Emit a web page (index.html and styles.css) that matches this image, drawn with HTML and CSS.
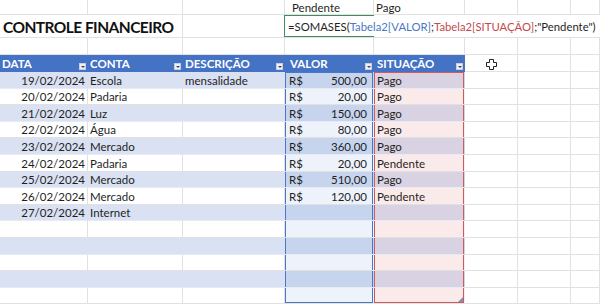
FILE: index.html
```html
<!DOCTYPE html>
<html lang="pt-BR">
<head>
<meta charset="utf-8">
<title>Controle Financeiro</title>
<link rel="stylesheet" href="styles.css">
</head>
<body>
<div class="sheet">
  <div class="row r1">
    <div class="c"></div><div class="c"></div><div class="c"></div>
    <div class="c ind">Pendente</div><div class="c">Pago</div>
    <div class="c"></div><div class="c"></div><div class="c"></div>
  </div>
  <div class="row r2">
    <div class="c title">CONTROLE FINANCEIRO</div>
    <div class="c"></div>
    <div class="c formula">
      <div class="active"><span>=SOMASES(</span><span class="ref-b">Tabela2[VALOR]</span><span>;</span><span class="ref-r">Tabela2[SITUAÇÃO]</span><span>;"Pendente")</span><span class="caret"></span></div>
    </div>
  </div>
  <div class="row r3">
    <div class="c"></div><div class="c"></div><div class="c"></div><div class="c"></div>
    <div class="c"></div><div class="c"></div><div class="c"></div><div class="c"></div>
  </div>
  <div class="row head">
    <div class="c h">DATA<i class="flt"></i></div>
    <div class="c h">CONTA<i class="flt"></i></div>
    <div class="c h">DESCRIÇÃO<i class="flt"></i></div>
    <div class="c h">VALOR<i class="flt"></i></div>
    <div class="c h">SITUAÇÃO<i class="flt"></i></div>
    <div class="c cur"><svg width="11" height="11" viewBox="0 0 11 11"><path d="M3.5 .5h4v3h3v4h-3v3h-4v-3h-3v-4h3z" fill="#fff" stroke="#222" stroke-width="1"/></svg></div>
    <div class="c"></div><div class="c"></div>
  </div>

  <div class="row band first">
    <div class="c t d">19/02/2024</div><div class="c t">Escola</div><div class="c t">mensalidade</div>
    <div class="c t v"><span>R$</span><span>500,00</span></div><div class="c t s">Pago</div>
    <div class="c"></div><div class="c"></div><div class="c"></div>
  </div>
  <div class="row">
    <div class="c t d">20/02/2024</div><div class="c t">Padaria</div><div class="c t"></div>
    <div class="c t v"><span>R$</span><span>20,00</span></div><div class="c t s">Pago</div>
    <div class="c"></div><div class="c"></div><div class="c"></div>
  </div>
  <div class="row band">
    <div class="c t d">21/02/2024</div><div class="c t">Luz</div><div class="c t"></div>
    <div class="c t v"><span>R$</span><span>150,00</span></div><div class="c t s">Pago</div>
    <div class="c"></div><div class="c"></div><div class="c"></div>
  </div>
  <div class="row">
    <div class="c t d">22/02/2024</div><div class="c t">Água</div><div class="c t"></div>
    <div class="c t v"><span>R$</span><span>80,00</span></div><div class="c t s">Pago</div>
    <div class="c"></div><div class="c"></div><div class="c"></div>
  </div>
  <div class="row band">
    <div class="c t d">23/02/2024</div><div class="c t">Mercado</div><div class="c t"></div>
    <div class="c t v"><span>R$</span><span>360,00</span></div><div class="c t s">Pago</div>
    <div class="c"></div><div class="c"></div><div class="c"></div>
  </div>
  <div class="row">
    <div class="c t d">24/02/2024</div><div class="c t">Padaria</div><div class="c t"></div>
    <div class="c t v"><span>R$</span><span>20,00</span></div><div class="c t s">Pendente</div>
    <div class="c"></div><div class="c"></div><div class="c"></div>
  </div>
  <div class="row band">
    <div class="c t d">25/02/2024</div><div class="c t">Mercado</div><div class="c t"></div>
    <div class="c t v"><span>R$</span><span>510,00</span></div><div class="c t s">Pago</div>
    <div class="c"></div><div class="c"></div><div class="c"></div>
  </div>
  <div class="row">
    <div class="c t d">26/02/2024</div><div class="c t">Mercado</div><div class="c t"></div>
    <div class="c t v"><span>R$</span><span>120,00</span></div><div class="c t s">Pendente</div>
    <div class="c"></div><div class="c"></div><div class="c"></div>
  </div>
  <div class="row band">
    <div class="c t d">27/02/2024</div><div class="c t">Internet</div><div class="c t"></div>
    <div class="c t v"></div><div class="c t s"></div>
    <div class="c"></div><div class="c"></div><div class="c"></div>
  </div>
  <div class="row">
    <div class="c t"></div><div class="c t"></div><div class="c t"></div>
    <div class="c t v"></div><div class="c t s"></div>
    <div class="c"></div><div class="c"></div><div class="c"></div>
  </div>
  <div class="row band">
    <div class="c t"></div><div class="c t"></div><div class="c t"></div>
    <div class="c t v"></div><div class="c t s"></div>
    <div class="c"></div><div class="c"></div><div class="c"></div>
  </div>
  <div class="row">
    <div class="c t"></div><div class="c t"></div><div class="c t"></div>
    <div class="c t v"></div><div class="c t s"></div>
    <div class="c"></div><div class="c"></div><div class="c"></div>
  </div>
  <div class="row band">
    <div class="c t"></div><div class="c t"></div><div class="c t"></div>
    <div class="c t v"></div><div class="c t s"></div>
    <div class="c"></div><div class="c"></div><div class="c"></div>
  </div>
  <div class="row last">
    <div class="c t"></div><div class="c t"></div><div class="c t"></div>
    <div class="c t v"></div><div class="c t s"><svg class="grip" width="5" height="5" viewBox="0 0 5 5"><path d="M5 0V5H0z" fill="#7f8fb8"/></svg></div>
    <div class="c"></div><div class="c"></div><div class="c"></div>
  </div>
</div>
</body>
</html>
```
FILE: styles.css
```css
* { box-sizing: border-box; }
html, body { margin: 0; padding: 0; background: #fff; }
body {
  width: 600px;
  height: 305px;
  overflow: hidden;
  font-family: Lato, "Liberation Sans", sans-serif;
  font-size: 11.5px;
  color: #1f1f1f;
}
.sheet {
  display: grid;
  grid-template-columns: 88px 95px 102px 89px 91px 53px 53px 1fr;
  grid-template-rows: 15px 23px 17px 17px repeat(14, 16.6px);
}
.row { display: contents; }
.c {
  border-right: 1px solid #e1e1e1;
  border-bottom: 1px solid #e1e1e1;
  display: flex;
  align-items: flex-end;
  padding: 0 2px 1px 2px;
  white-space: nowrap;
  min-width: 0;
  position: relative;
}
.ind { padding-left: 7px; }
.r1 .c { padding-bottom: 0; }

/* title row */
.r2 .c { align-items: center; }
.title {
  grid-column: 1 / 3;
  font-weight: 700;
  font-size: 15.5px;
  letter-spacing: -0.55px;
  color: #111;
  padding-left: 3px;
  padding-top: 2px;
}
.formula {
  grid-column: 4 / -1;
  border-right: none;
  padding: 0;
  align-items: stretch !important;
}
.active {
  width: 90px;
  margin-left: -1px;
  border: 1px solid #3f8c5c;
  border-right: none;
  display: flex;
  align-items: center;
  padding-left: 3px;
  padding-top: 1px;
  overflow: visible;
  white-space: nowrap;
  font-size: 11.3px;
}
.ref-b { color: #4a78c2; }
.ref-r { color: #c2494d; }
.caret {
  display: inline-block;
  width: 1px;
  height: 15px;
  background: #111;
  margin-left: 2px;
}

/* header */
.h {
  background: #4472c4;
  border-right-color: #4472c4;
  border-bottom-color: #4472c4;
  color: #fff;
  font-weight: 700;
  justify-content: space-between;
  padding-right: 1px;
}
.h:nth-child(4) { padding-left: 5px; }
.h:nth-child(5) { padding-left: 3px; }
.flt {
  width: 7px;
  height: 7px;
  background: #eef0f4;
  border: 1px solid #c9cfd9;
  display: flex;
  align-items: center;
  justify-content: center;
}
.flt::after {
  content: "";
  border-left: 2px solid transparent;
  border-right: 2px solid transparent;
  border-top: 2px solid #444;
}
.cur { align-items: center; justify-content: center; padding: 2px 0 0 0; }

/* table body */
.t { background: #fff; }
.band .t {
  background: #d9e1f2;
  border-right-color: #d9e1f2;
  border-bottom-color: #e6ebf6;
}
.d { justify-content: flex-end; padding-right: 2px; }
.v {
  background: #edf2fb !important;
  border-right-color: transparent !important;
  justify-content: space-between;
  padding-left: 4px;
  padding-right: 6px;
  box-shadow: inset 1px 0 #4a78c8, inset -1px 0 #4a78c8;
}
.band .v { background: #c6d4ee !important; }
.s {
  background: #fbeaea !important;
  border-right-color: transparent !important;
  padding-left: 3px;
  box-shadow: inset 1px 0 #cf5a5e, inset -1px 0 #cf5a5e;
}
.band .s { background: #d9d2e2 !important; }
.first .v { box-shadow: inset 1px 0 #4a78c8, inset -1px 0 #4a78c8, inset 0 1px #4a78c8; }
.first .s { box-shadow: inset 1px 0 #cf5a5e, inset -1px 0 #cf5a5e, inset 0 1px #cf5a5e; }
.last .v { box-shadow: inset 1px 0 #4a78c8, inset -1px 0 #4a78c8, inset 0 -1px #4a78c8; }
.last .s { box-shadow: inset 1px 0 #cf5a5e, inset -1px 0 #cf5a5e, inset 0 -1px #cf5a5e; }
.grip { position: absolute; right: 1px; bottom: 1px; }
```
